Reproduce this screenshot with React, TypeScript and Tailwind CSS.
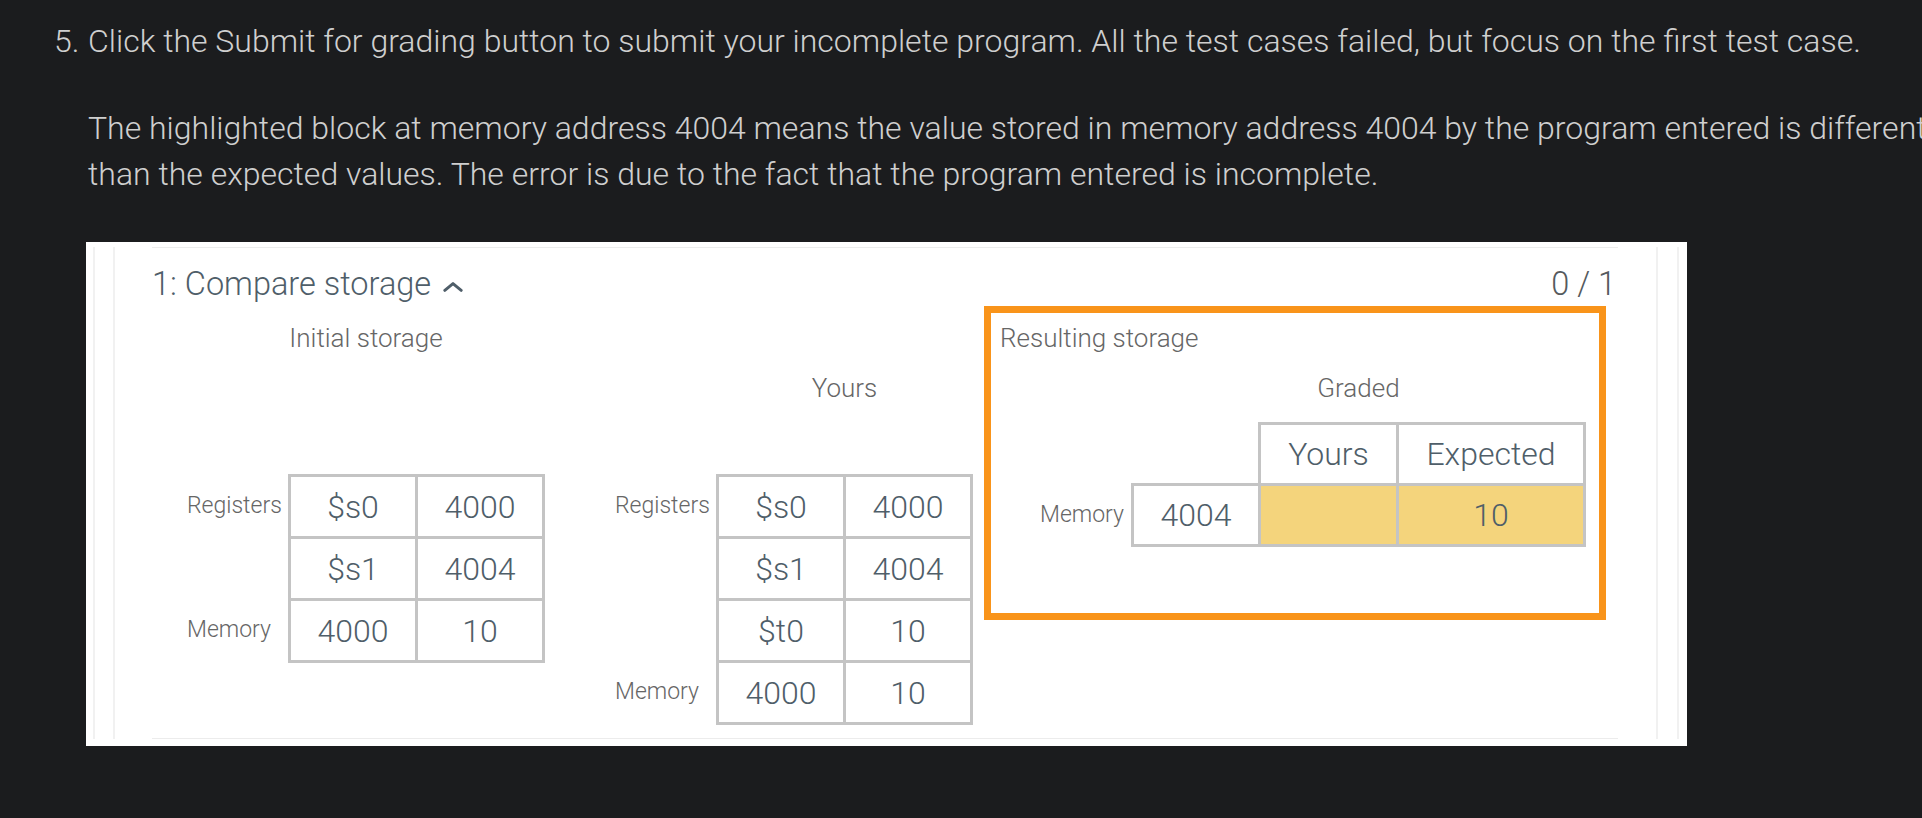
import React from "react";

const GRAY = "bg-[#c4c4c4]";

function Cell({ children, w, yellow, h }: { children?: React.ReactNode; w: string; yellow?: boolean; h?: string }) {
  return (
    <div
      className={[
        "flex items-center justify-center text-[32px] font-light text-[#4f5e69]",
        w,
        h ?? "h-[59px]",
        yellow ? "bg-[#f4d47c]" : "bg-white",
      ].join(" ")}
    >
      {children}
    </div>
  );
}

function Label({ children, h }: { children?: React.ReactNode; h?: string }) {
  return (
    <div className={["flex items-center text-[23px] font-light text-[#666666]", h ?? "h-[59px]"].join(" ")}>
      {children}
    </div>
  );
}

function Chevron() {
  return (
    <svg width="20" height="10" viewBox="0 0 20 10" className="mt-[16px] ml-[12px] shrink-0">
      <polyline
        points="1.8,8.4 10,1.6 18.2,8.4"
        fill="none"
        stroke="#4f5e69"
        strokeWidth="2.9"
        strokeLinecap="round"
        strokeLinejoin="round"
      />
    </svg>
  );
}

export default function App() {
  return (
    <div className="min-h-screen w-full overflow-hidden bg-[#1b1c1e] font-['Roboto',sans-serif]">
      <div className="flex pt-[18px] pl-[54px]">
        <div className="w-[34px] shrink-0 text-[32px] font-light leading-[46px] text-[#cfcfcf]">5.</div>
        <div className="min-w-0">
          <p className="whitespace-nowrap text-[32px] font-light leading-[46px] text-[#cfcfcf]">
            Click the Submit for grading button to submit your incomplete program. All the test cases failed, but focus on the first test case.
          </p>
          <p className="mt-[41px] whitespace-nowrap text-[32px] font-light leading-[46px] text-[#cfcfcf]">
            The highlighted block at memory address 4004 means the value stored in memory address 4004 by the program entered is different
            <br />
            than the expected values. The error is due to the fact that the program entered is incomplete.
          </p>

          {/* Card */}
          <div className="mt-[45px] -ml-[2px] w-[1601px] bg-white pt-[5px] pb-[7px] pl-[7px] pr-[8px]">
            <div className="border-x-2 border-[#f1f1f1] pl-[18px] pr-[19px]">
              <div className="border-x-2 border-[#f1f1f1] pl-[37px] pr-[38px]">
                <div className="border-y border-[#ececec] pt-[18px] pb-[13px]">
                  {/* Title row */}
                  <div className="flex items-start justify-between pr-[2px]">
                    <div className="flex items-start">
                      <span className="text-[32.5px] font-light leading-[37px] text-[#4f5e69]">1: Compare storage</span>
                      <Chevron />
                    </div>
                    <span className="text-[32.5px] font-light leading-[37px] text-[#555a5e]">0 / 1</span>
                  </div>

                  {/* Main row */}
                  <div className="mt-[3px] flex items-start">
                    {/* Initial storage */}
                    <div className="ml-[35px] flex flex-col items-center">
                      <div className="mt-[17px] text-[26px] font-light leading-[30px] text-[#666666]">Initial storage</div>
                      <div className="mt-[121px] flex">
                        <div className="flex w-[101px] flex-col gap-[3px] pt-[3px]">
                          <Label>Registers</Label>
                          <Label />
                          <Label>Memory</Label>
                        </div>
                        <div className={`grid grid-cols-[124px_124px] gap-[3px] p-[3px] ${GRAY}`}>
                          <Cell w="w-[124px]">$s0</Cell>
                          <Cell w="w-[124px]">4000</Cell>
                          <Cell w="w-[124px]">$s1</Cell>
                          <Cell w="w-[124px]">4004</Cell>
                          <Cell w="w-[124px]">4000</Cell>
                          <Cell w="w-[124px]">10</Cell>
                        </div>
                      </div>
                    </div>

                    {/* Yours */}
                    <div className="ml-[70px] flex flex-col">
                      <div className="mt-[67px] pl-[101px] text-center text-[26px] font-light leading-[30px] text-[#666666]">Yours</div>
                      <div className="mt-[71px] flex">
                        <div className="flex w-[101px] flex-col gap-[3px] pt-[3px]">
                          <Label>Registers</Label>
                          <Label />
                          <Label />
                          <Label>Memory</Label>
                        </div>
                        <div className={`grid grid-cols-[124px_124px] gap-[3px] p-[3px] ${GRAY}`}>
                          <Cell w="w-[124px]">$s0</Cell>
                          <Cell w="w-[124px]">4000</Cell>
                          <Cell w="w-[124px]">$s1</Cell>
                          <Cell w="w-[124px]">4004</Cell>
                          <Cell w="w-[124px]">$t0</Cell>
                          <Cell w="w-[124px]">10</Cell>
                          <Cell w="w-[124px]">4000</Cell>
                          <Cell w="w-[124px]">10</Cell>
                        </div>
                      </div>
                    </div>

                    {/* Resulting storage (highlighted) */}
                    <div className="ml-[11px] h-[314px] w-[622px] border-[7px] border-[#f9941a] pt-[10px]">
                      <div className="pl-[9px] text-[26px] font-light leading-[30px] text-[#666666]">Resulting storage</div>
                      <div className="ml-[49px] flex flex-col">
                        <div className="mt-[20px] pl-[78px] text-center text-[26px] font-light leading-[30px] text-[#666666]">Graded</div>
                        <div className="mt-[19px] flex">
                          <div className="w-[218px] shrink-0" />
                          <div className={`grid grid-cols-[135px_184px] gap-[3px] px-[3px] pt-[3px] ${GRAY}`}>
                            <Cell w="w-[135px]" h="h-[58px]">Yours</Cell>
                            <Cell w="w-[184px]" h="h-[58px]">Expected</Cell>
                          </div>
                        </div>
                        <div className="flex">
                          <div className="flex w-[91px] flex-col pt-[3px]">
                            <Label h="h-[58px]">Memory</Label>
                          </div>
                          <div className={`grid grid-cols-[124px_135px_184px] gap-[3px] p-[3px] ${GRAY}`}>
                            <Cell w="w-[124px]" h="h-[58px]">4004</Cell>
                            <Cell w="w-[135px]" h="h-[58px]" yellow />
                            <Cell w="w-[184px]" h="h-[58px]" yellow>10</Cell>
                          </div>
                        </div>
                      </div>
                    </div>
                  </div>
                </div>
              </div>
            </div>
          </div>
        </div>
      </div>
    </div>
  );
}
